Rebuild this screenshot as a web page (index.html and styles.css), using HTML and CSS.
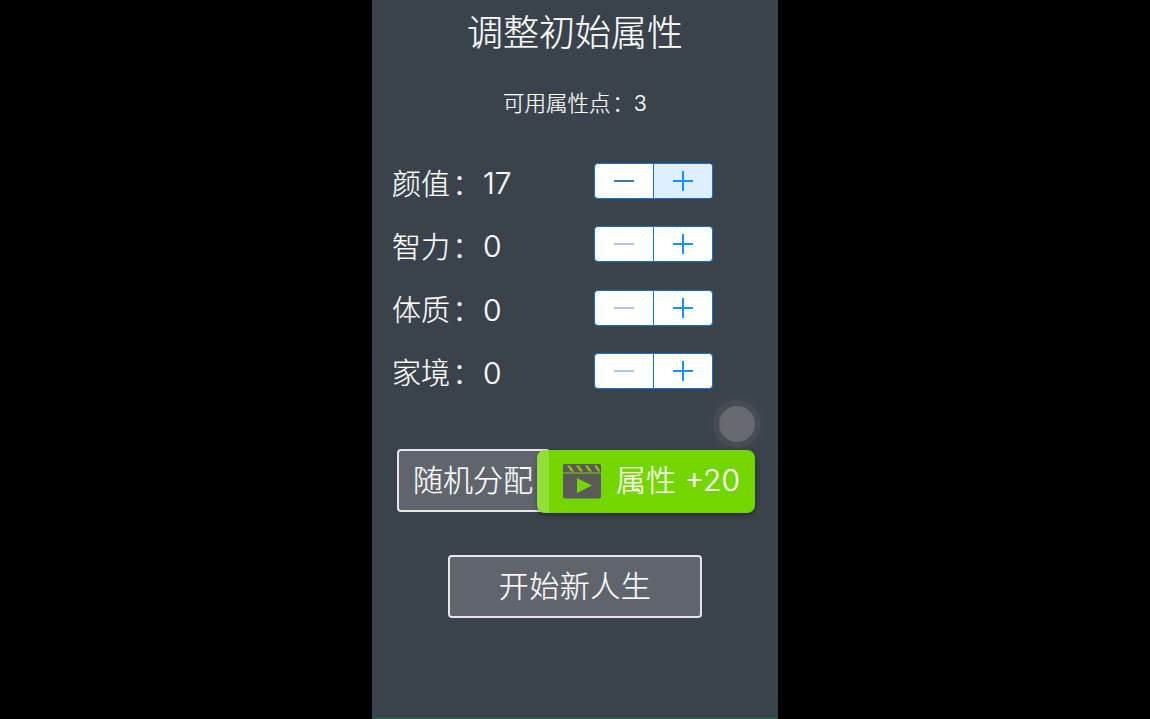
FILE: index.html
```html
<!DOCTYPE html>
<html lang="zh">
<head>
<meta charset="utf-8">
<title>调整初始属性</title>
<link rel="stylesheet" href="styles.css">
</head>
<body>
<main class="phone">
  <h1 class="title">调整初始属性</h1>
  <p class="points">可用属性点<span class="colon">：</span>3</p>
  <section class="attrs">
    <div class="attr">
      <span class="name">颜值<span class="colon">：</span></span><span class="value">17</span>
      <div class="stepper"><span class="step"><i class="minus"></i></span><span class="step active"><i class="plus"></i></span></div>
    </div>
    <div class="attr">
      <span class="name">智力<span class="colon">：</span></span><span class="value">0</span>
      <div class="stepper"><span class="step off"><i class="minus"></i></span><span class="step"><i class="plus"></i></span></div>
    </div>
    <div class="attr">
      <span class="name">体质<span class="colon">：</span></span><span class="value">0</span>
      <div class="stepper"><span class="step off"><i class="minus"></i></span><span class="step"><i class="plus"></i></span></div>
    </div>
    <div class="attr">
      <span class="name">家境<span class="colon">：</span></span><span class="value">0</span>
      <div class="stepper"><span class="step off"><i class="minus"></i></span><span class="step"><i class="plus"></i></span></div>
    </div>
  </section>
  <div class="actions">
    <button class="ghost random">随机分配</button>
    <button class="ad">
      <svg class="clap" viewBox="0 0 38 35" aria-hidden="true">
        <path fill="#5a5a58" d="M1.500 0H36.500A1.500 1.500 0 0 1 38 1.500V8.500H0V1.500A1.500 1.500 0 0 1 1.500 0Z"/>
        <path fill="#93bb22" d="M4 1.500H7L11 7.500H8ZM13 1.500H16L20 7.500H17ZM22 1.500H25L29 7.500H26ZM31 1.500H34L37 6.500V7.500H35Z"/>
        <path fill="#5a5a58" d="M0 9.500H38V32.500A2 2 0 0 1 36 34.500H2A2 2 0 0 1 0 32.500Z"/>
        <path fill="#74d600" d="M14 14L29 21.500L14 29Z"/>
      </svg>
      <span class="ad-label">属性 +20</span>
    </button>
  </div>
  <button class="ghost start">开始新人生</button>
  <div class="float-ball"></div>
</main>
</body>
</html>
```
FILE: styles.css
```css
* { box-sizing: border-box; }
html, body { margin: 0; height: 100%; }
body {
  background: #000;
  display: flex;
  justify-content: center;
  font-family: Inter, "Noto Sans CJK SC", "Liberation Sans", sans-serif;
  font-weight: 300;
  color: #fff;
  overflow: hidden;
  -webkit-text-stroke: .2px currentColor;
}
.colon { font-family: "Noto Sans CJK TC", sans-serif; padding-left: .08em; }
.phone {
  position: relative;
  width: 406px;
  height: 719px;
  background: #3a424c;
  border-bottom: 2px solid #2a5a44;
  display: flex;
  flex-direction: column;
  align-items: center;
}
.title {
  margin: 8px 0 0;
  font-size: 36px;
  font-weight: 300;
  line-height: 50px;
}
.points {
  margin: 31px 0 0;
  font-size: 21.500px;
  line-height: 26px;
}
.attrs {
  align-self: stretch;
  margin-top: 47px;
  padding: 0 65px 0 20px;
  display: flex;
  flex-direction: column;
  gap: 27.300px;
}
.attr {
  display: flex;
  align-items: center;
  height: 36px;
  font-size: 29px;
  line-height: 36px;
}
.name { width: 91px; padding-top: 4px; }
.value { flex: 1; padding-top: 4px; font-size: 30px; }
.stepper {
  width: 119px;
  height: 36px;
  display: flex;
  background: #fff;
  border: 1.500px solid #1473c8;
  border-radius: 4px;
  overflow: hidden;
}
.step {
  flex: 1;
  display: flex;
  align-items: center;
  justify-content: center;
}
.step + .step { border-left: 1.500px solid #1473c8; }
.step.active { background: #ddeeff; }
.step i { position: relative; display: block; width: 20px; height: 20px; }
.minus::before, .plus::before, .plus::after {
  content: "";
  position: absolute;
  background: #1890ff;
}
.minus::before, .plus::before { left: 0; right: 0; top: 9px; height: 2px; }
.plus::after { top: 0; bottom: 0; left: 9px; width: 2px; }
.minus::before { background: #3a7ab0; }
.off .minus::before { background: #a9c8e6; }
.actions {
  align-self: stretch;
  margin-top: 60px;
  padding-left: 25px;
  display: flex;
  height: 64px;
}
button { font-family: inherit; font-weight: 300; cursor: pointer; }
.ghost {
  background: #60656d;
  border: 2px solid #e4e6e9;
  border-radius: 4px;
  color: #fff;
  padding: 0;
}
.random {
  width: 153px;
  height: 63px;
  font-size: 30px;
  text-align: left;
  padding: 0 0 5px 14px;
  flex: none;
}
.ad {
  position: relative;
  flex: none;
  width: 218px;
  height: 63px;
  margin: 1px 0 0 -13px;
  background: #74d600;
  border: 0;
  border-radius: 8px;
  box-shadow: 0 2px 4px rgba(0,0,0,.35);
  color: #fff;
  font-size: 30px;
  display: flex;
  align-items: center;
  gap: 15px;
  padding: 0 0 0 26px;
}
.ad::before {
  content: "";
  position: absolute;
  left: 0; top: 0; bottom: 0;
  width: 12px;
  background: rgba(255,255,255,.22);
  border-radius: 8px 0 0 8px;
}
.ad-label { margin-bottom: 6px; }
.clap { width: 38px; height: 35px; flex: none; }
.start {
  margin-top: 42px;
  width: 254px;
  height: 63px;
  font-size: 30px;
  letter-spacing: .5px;
  padding-bottom: 4px;
}
.float-ball {
  position: absolute;
  left: 347px;
  top: 406px;
  width: 36px;
  height: 36px;
  border-radius: 50%;
  background: #66696f;
  box-shadow: 0 0 0 6px #464b54, 0 0 0 11px rgba(255,255,255,.015);
}
```
